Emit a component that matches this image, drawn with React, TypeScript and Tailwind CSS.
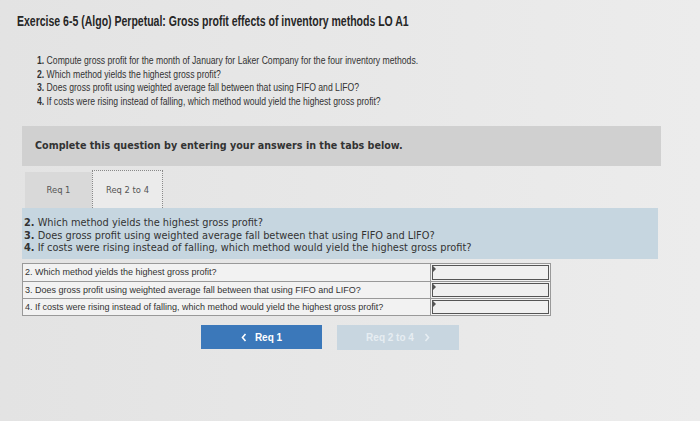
export default function App() {
  const arial = { fontFamily: '"Liberation Sans", Arial, sans-serif' };
  const verdana = { fontFamily: '"DejaVu Sans", Verdana, sans-serif' };

  const questions = [
    "Compute gross profit for the month of January for Laker Company for the four inventory methods.",
    "Which method yields the highest gross profit?",
    "Does gross profit using weighted average fall between that using FIFO and LIFO?",
    "If costs were rising instead of falling, which method would yield the highest gross profit?",
  ];

  return (
    <div
      className="w-[700px] h-[421px] overflow-hidden bg-gradient-to-r from-[#e3e3e3] to-[#ececec] text-[#2b2b2b]"
      style={arial}
    >
      {/* the source font is a condensed face, so the wide Arial metrics are squeezed */}
      <h1 className="pt-[12px] pl-[17px] text-[14px] font-bold leading-[18px] text-[#262626] whitespace-nowrap">
        <span className="inline-block origin-left scale-x-[0.75]">
          Exercise 6-5 (Algo) Perpetual: Gross profit effects of inventory methods LO A1
        </span>
      </h1>

      <ol className="mt-[24px] pl-[37px] text-[11px] leading-[13.6px] text-[#333] whitespace-nowrap">
        {questions.map((q, i) => (
          <li key={i}>
            <span className="inline-block origin-left scale-x-[0.785]">
              <span className="font-bold">{i + 1}.</span> {q}
            </span>
          </li>
        ))}
      </ol>

      <div
        className="mt-[18px] ml-[22px] w-[639px] h-[40px] bg-[#d0d0d0] flex items-center pl-[13px] text-[9.6px] font-bold text-[#333]"
        style={verdana}
      >
        Complete this question by entering your answers in the tabs below.
      </div>

      <div className="mt-[4px] ml-[25px] flex items-end h-[38px]" style={verdana}>
        <div className="w-[67px] h-[36px] bg-[#d9d9d9] flex items-center justify-center text-[8.4px] text-[#555]">
          Req 1
        </div>
        <div className="w-[71px] h-[38px] bg-[#ebebeb] border-x border-t border-dotted border-[#888] flex items-center justify-center text-[8.4px] text-[#555]">
          Req 2 to 4
        </div>
      </div>

      <div
        className="ml-[22px] w-[636px] h-[51px] bg-[#c6d6e0] pl-[2px] pt-[9px] text-[9.8px] leading-[12.5px] text-[#333]"
        style={verdana}
      >
        <div><span className="font-bold">2.</span> Which method yields the highest gross profit?</div>
        <div><span className="font-bold">3.</span> Does gross profit using weighted average fall between that using FIFO and LIFO?</div>
        <div><span className="font-bold">4.</span> If costs were rising instead of falling, which method would yield the highest gross profit?</div>
      </div>

      <div className="mt-[4px] ml-[22px] w-[529px] border border-[#999] bg-[#f2f2f2] text-[9px] text-[#333]">
        {questions.slice(1).map((q, i) => (
          <div key={i} className={`flex h-[17px] ${i > 0 ? "border-t border-[#999]" : ""}`}>
            <div className="flex-1 flex items-center pl-[2px] border-r border-[#999] whitespace-nowrap">
              {i + 2}. {q}
            </div>
            <div className="w-[119px] p-[1px]">
              <div className="relative w-full h-full border border-[#555] bg-[#f0f0f0]">
                <span className="absolute left-0 top-0 w-0 h-0 border-t-[3px] border-b-[3px] border-l-[3px] border-t-transparent border-b-transparent border-l-[#555]" />
              </div>
            </div>
          </div>
        ))}
      </div>

      <div className="mt-[9px] ml-[201px] flex gap-[15px] text-[10px] font-bold">
        <div className="w-[121px] h-[24px] bg-[#3b78ba] text-white flex items-center justify-center gap-[8px]">
          <svg width="6" height="9" viewBox="0 0 6 9" fill="none" stroke="currentColor" strokeWidth="1.6">
            <path d="M4.5 1 L1.5 4.5 L4.5 8" />
          </svg>
          <span>Req 1</span>
        </div>
        <div className="w-[122px] h-[25px] bg-[#c8d6e0] text-[#e6edf2] flex items-center justify-center gap-[10px]">
          <span>Req 2 to 4</span>
          <svg width="6" height="9" viewBox="0 0 6 9" fill="none" stroke="currentColor" strokeWidth="1.6">
            <path d="M1.5 1 L4.5 4.5 L1.5 8" />
          </svg>
        </div>
      </div>
    </div>
  );
}
